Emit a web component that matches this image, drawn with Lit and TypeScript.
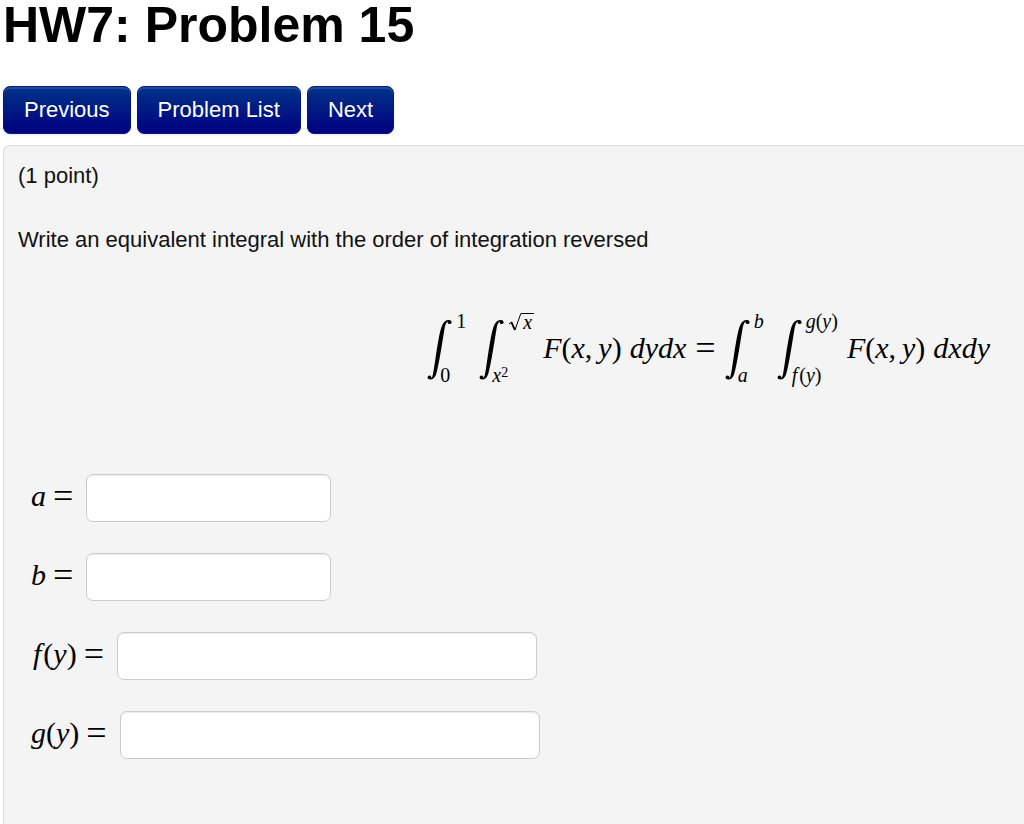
import { LitElement, html, css, svg } from "lit";
import { customElement } from "lit/decorators.js";

const v = (name: string) => html`<i class="v-${name}">${name}</i>`;

const call = (fn: string, arg: string) =>
  html`<span class="term">${v(fn)}<span>(</span>${v(arg)}<span>)</span></span>`;

const integral = (lower: unknown, upper: unknown) => html`
  <span class="integral">
    <svg class="sign" viewBox="0 0 26 62" aria-hidden="true">
      ${svg`<path d="M1.4 59.2C4.2 62 7.6 60 9.2 55C12.2 45 15.6 21 17.6 9.5C18.6 3.6 20.6 1 23.6 2.8L24 2C20.4 -.4 16.8 1.4 14.6 7.5C11 18 8.4 42 6.2 54C5.4 58.8 4 60.8 1.8 58.4Z"/>
      <circle cx="22.6" cy="3.2" r="1.9"/><circle cx="2.5" cy="58.4" r="1.9"/>`}
    </svg>
    <span class="limits">
      <span class="upper">${upper}</span>
      <span class="lower">${lower}</span>
    </span>
  </span>
`;

const integrand = (first: string, second: string) => html`
  <span class="integrand">
    <span class="term">${v("F")}<span>(</span>${v("x")}<span class="comma">,</span>${v("y")}<span>)</span></span>
    ${v(`d${first}d${second}`)}
  </span>
`;

const root = html`
  <span class="root">
    <svg class="radical" viewBox="0 0 13 18" aria-hidden="true">
      <path d="M1 11L3.6 9L7 17L12.8 .5" fill="none" stroke="currentColor" stroke-width="1"/>
      <path d="M3.4 9.4L7 17" stroke="currentColor" stroke-width="1.8"/>
    </svg><span class="radicand">${v("x")}</span>
  </span>
`;

@customElement("app-root")
export class AppRoot extends LitElement {
  static styles = css`
    :host {
      display: flex;
      flex-direction: column;
      min-height: 100vh;
      box-sizing: border-box;
      padding-left: 3px;
      background: #fff;
      color: #111;
      font: 22px/32px "Liberation Sans", Arial, sans-serif;
    }
    h1 {
      margin: 0;
      color: #000;
      font-size: 50px;
      line-height: 50px;
    }
    .nav {
      display: flex;
      flex-wrap: wrap;
      gap: 6px;
      margin-top: 36px;
    }
    .nav button {
      height: 48px;
      padding: 0 20px;
      border: 1px solid #001a80;
      border-radius: 7px;
      background: linear-gradient(#003388, #000080);
      box-shadow: inset 0 2px 0 #1f4c98, 0 1px 2px #0000001a;
      color: #fff;
      font: inherit;
      text-shadow: 0 -1px 0 #00000040;
    }
    .panel {
      flex: 1;
      margin-top: 11px;
      padding: 14px;
      border: 1px solid #dcdcdc;
      border-width: 1px 0 0 1px;
      border-radius: 7px 0 0 0;
      background: #f4f4f5;
    }
    p {
      margin: 0 0 32px;
    }
    .math {
      color: #000;
      font: 30px/32px "Liberation Serif", "Times New Roman", serif;
    }
    .equation {
      display: flex;
      justify-content: flex-end;
      align-items: center;
      gap: 9px;
      margin: 54px 20px 88px 0;
      white-space: nowrap;
    }
    .term {
      display: inline-flex;
    }
    .v-f {
      margin: 0 2px;
    }
    .comma {
      margin-right: 6px;
    }
    .equals {
      font-size: 36px;
    }
    .integrand {
      display: flex;
      gap: 8px;
    }
    .integral {
      display: flex;
      align-items: center;
    }
    .integral + .integral {
      margin-left: 4px;
    }
    .sign {
      width: 26px;
      height: 62px;
      margin-top: 4px;
    }
    .limits {
      display: flex;
      flex-direction: column;
      justify-content: space-between;
      height: 76px;
      font-size: 20px;
      line-height: 22px;
    }
    .upper {
      padding-left: 3px;
    }
    .lower {
      margin-left: -13px;
    }
    .lower sup {
      font-size: 14px;
      line-height: 0;
      vertical-align: 5px;
    }
    .root {
      display: flex;
      padding-top: 3px;
    }
    .radical {
      width: 13px;
      height: 18px;
    }
    .radicand {
      height: 18px;
      padding: 0 2px;
      border-top: 1px solid;
      line-height: 16px;
    }
    form {
      display: grid;
      gap: 31px;
      padding-left: 13px;
    }
    .field {
      display: flex;
      align-items: center;
      gap: 13px;
    }
    .field label {
      display: flex;
      gap: 7px;
      padding-bottom: 4px;
    }
    input {
      box-sizing: border-box;
      width: 245px;
      height: 48px;
      padding: 0 10px;
      border: 1px solid #ccc;
      border-radius: 7px;
      background: #fff;
      box-shadow: inset 0 1px 1px #00000013;
      font: 22px "Liberation Sans", Arial, sans-serif;
    }
    input.wide {
      width: 420px;
    }
  `;

  private fields = [
    { id: "a", label: v("a"), wide: false },
    { id: "b", label: v("b"), wide: false },
    { id: "f", label: call("f", "y"), wide: true },
    { id: "g", label: call("g", "y"), wide: true },
  ];

  render() {
    return html`
      <h1>HW7: Problem 15</h1>
      <nav class="nav">
        <button type="button">Previous</button>
        <button type="button">Problem List</button>
        <button type="button">Next</button>
      </nav>
      <main class="panel">
        <p>(1 point)</p>
        <p>Write an equivalent integral with the order of integration reversed</p>
        <div class="math equation">
          ${integral("0", "1")}
          ${integral(html`${v("x")}<sup>2</sup>`, root)}
          ${integrand("y", "x")}
          <span class="equals">=</span>
          ${integral(v("a"), v("b"))}
          ${integral(call("f", "y"), call("g", "y"))}
          ${integrand("x", "y")}
        </div>
        <form>
          ${this.fields.map(
            (f) => html`
              <div class="field">
                <label class="math" for=${f.id}>${f.label}<span class="equals">=</span></label>
                <input id=${f.id} type="text" class=${f.wide ? "wide" : ""} />
              </div>
            `
          )}
        </form>
      </main>
    `;
  }
}
